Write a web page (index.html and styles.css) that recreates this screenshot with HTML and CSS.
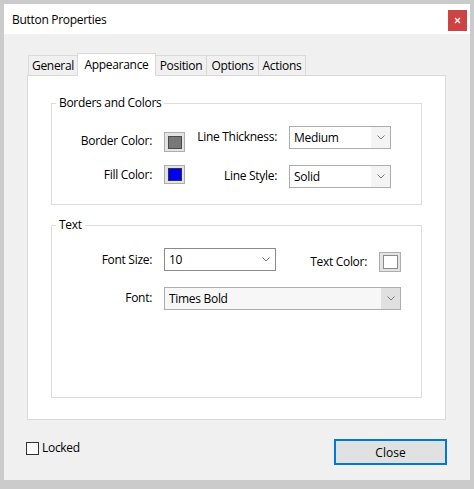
FILE: index.html
```html
<!DOCTYPE html>
<html>
<head>
<meta charset="utf-8">
<link rel="stylesheet" href="styles.css">
</head>
<body>
<div class="window">
  <div class="titlebar">
    <span class="title">Button Properties</span>
    <div class="close"><svg width="7" height="7" viewBox="0 0 7 7"><path d="M1 1L6 6M6 1L1 6" stroke="#fff" stroke-width="1.3"/></svg></div>
  </div>
  <div class="content">
    <div class="tabs">
      <div class="tab t-general">General</div>
      <div class="tab t-appearance active">Appearance</div>
      <div class="tab t-position">Position</div>
      <div class="tab t-options">Options</div>
      <div class="tab t-actions">Actions</div>
    </div>
    <div class="panel">
      <fieldset class="group">
        <legend>Borders and Colors</legend>
        <div class="grid grid-borders">
          <div class="lbl r1-l1">Border Color:</div>
          <div class="swatch r1-sw"><span class="chip chip-grey"></span></div>
          <div class="lbl r1-l2">Line Thickness:</div>
          <div class="select select-plain"><span class="val">Medium</span><span class="arrow"><svg width="8" height="5" viewBox="0 0 8 5"><path d="M0.5 0.5L4 4L7.5 0.5" fill="none" stroke="#7a7a7a" stroke-width="1"/></svg></span></div>
          <div class="lbl r2-l1">Fill Color:</div>
          <div class="swatch r2-sw"><span class="chip chip-blue"></span></div>
          <div class="lbl r2-l2">Line Style:</div>
          <div class="select select-plain"><span class="val">Solid</span><span class="arrow"><svg width="8" height="5" viewBox="0 0 8 5"><path d="M0.5 0.5L4 4L7.5 0.5" fill="none" stroke="#7a7a7a" stroke-width="1"/></svg></span></div>
        </div>
      </fieldset>
      <fieldset class="group group-text">
        <legend>Text</legend>
        <div class="grid grid-text">
          <div class="lbl t1-l1">Font Size:</div>
          <div class="select select-edit"><span class="val">10</span><span class="arrow"><svg width="8" height="5" viewBox="0 0 8 5"><path d="M0.5 0.5L4 4L7.5 0.5" fill="none" stroke="#7a7a7a" stroke-width="1"/></svg></span></div>
          <div class="lbl t1-l2">Text Color:</div>
          <div class="swatch t1-sw"><span class="chip chip-white"></span></div>
          <div class="lbl t2-l1">Font:</div>
          <div class="select select-font"><span class="val">Times Bold</span><span class="arrow"><svg width="8" height="5" viewBox="0 0 8 5"><path d="M0.5 0.5L4 4L7.5 0.5" fill="none" stroke="#7a7a7a" stroke-width="1"/></svg></span></div>
        </div>
      </fieldset>
    </div>
    <div class="footer">
      <label class="check"><span class="box"></span><span>Locked</span></label>
      <button class="btn">Close</button>
    </div>
  </div>
</div>
</body>
</html>
```

FILE: styles.css
```css
* { box-sizing: border-box; }
html, body { margin: 0; }
body {
  background: #cbcbcb;
  font-family: "Open Sans", "Noto Sans", sans-serif;
  font-size: 12px;
  letter-spacing: -0.3px;
  color: #000;
  padding: 4px 4px 9px 4px;
  width: 474px;
  height: 489px;
  overflow: hidden;
}
.window {
  width: 466px;
  height: 476px;
  background: #f0f0f0;
  display: flex;
  flex-direction: column;
}
.titlebar {
  height: 30px;
  background: #fff;
  display: flex;
  justify-content: space-between;
  align-items: flex-start;
  padding: 6px 3px 0 8px;
}
.title { line-height: 18px; margin-top: 1px; color: #000; }
.close {
  width: 19px;
  height: 21px;
  background: #cd4242;
  display: flex;
  align-items: center;
  justify-content: center;
}
.close svg { display: block; }
.content { flex: 1; padding-top: 19px; }
.tabs {
  display: flex;
  align-items: flex-end;
  height: 22px;
  padding-left: 24px;
}
.tab {
  height: 20px;
  border: 1px solid #d9d9d9;
  border-bottom: none;
  background: #f0f0f0;
  line-height: 18px;
  padding-top: 1px;
  text-align: center;
  margin-left: -1px;
  color: #000;
}
.t-general { width: 50px; margin-left: 0; }
.t-appearance { width: 79px; }
.t-position { width: 52px; }
.t-options { width: 53px; }
.t-actions { width: 48px; }
.tab.active {
  height: 23px;
  margin-bottom: -1px;
  background: #fff;
  padding-top: 2px;
  position: relative;
  z-index: 1;
}
.panel {
  margin-left: 23px;
  width: 419px;
  height: 345px;
  background: #fff;
  border: 1px solid #d9d9d9;
  padding: 19px 0 0 23px;
}
.group {
  width: 371px;
  margin: 0;
  padding: 0;
  border: 1px solid #dcdcdc;
  min-width: 0;
}
.group legend {
  padding: 0 3px;
  margin-left: 4px;
  line-height: 16px;
}
.group-text { margin-top: 12px; }
.grid {
  display: grid;
  align-items: start;
}
.grid-borders {
  margin: 15px 0 16px 0;
  grid-template-columns: 112px 21px 104px 102px;
  row-gap: 13px;
}
.grid-text {
  margin: 15px 0 87px 0;
  grid-template-columns: 112px 112px 103px 22px;
  row-gap: 15px;
}
.lbl {
  text-align: right;
  padding-right: 12px;
  line-height: 16px;
  white-space: nowrap;
}
.r1-l1 { margin-top: 7px; }
.r1-sw { margin-top: 6px; height: 20px; }
.r1-l2 { margin-top: 3px; }
.r2-l1 { margin-top: 2px; }
.r2-sw { height: 19px; }
.r2-l2 { margin-top: 3px; }
.t1-l1 { margin-top: 4px; }
.t1-l2 { margin-top: 6px; }
.t1-sw { margin-top: 4px; height: 20px; }
.t2-l1 { margin-top: 3px; }

.swatch {
  border: 1px solid #adadad;
  background: #e3e3e3;
  display: flex;
  align-items: center;
  justify-content: center;
}
.chip { display: block; width: 14px; height: 13px; border: 1px solid #4a4a4a; }
.chip-grey { background: #787878; }
.chip-blue { background: #0000f4; border-color: #333; }
.chip-white { background: #fff; border-color: #8a8a8a; width: 15px; height: 14px; }

.select {
  height: 23px;
  border: 1px solid #adadad;
  display: flex;
  align-items: stretch;
}
.select .val {
  flex: 1;
  padding-left: 4px;
  line-height: 21px;
  white-space: nowrap;
}
.select .arrow {
  width: 19px;
  display: flex;
  align-items: center;
  justify-content: center;
}
.select .arrow svg { display: block; }
.select-plain { background: #fff; }
.select-plain .arrow { background: #f4f4f4; }
.select-edit { background: #fff; border-color: #8a8a8a; }
.select-font {
  grid-column: 2 / 5;
  background: #f7f7f7;
}
.select-font .arrow { background: #e0e0e0; }

.footer {
  display: flex;
  justify-content: space-between;
  align-items: flex-start;
  padding: 19px 23px 0 22px;
}
.check {
  display: flex;
  align-items: center;
  gap: 3px;
  margin-top: 1px;
  line-height: 16px;
}
.check .box {
  width: 13px;
  height: 13px;
  border: 1px solid #333;
  background: #fff;
}
.btn {
  width: 113px;
  height: 26px;
  border: 2px solid #0078d7;
  background: #e1e1e1;
  font: inherit;
  color: #000;
  padding: 0;
  margin: 0;
}
```
